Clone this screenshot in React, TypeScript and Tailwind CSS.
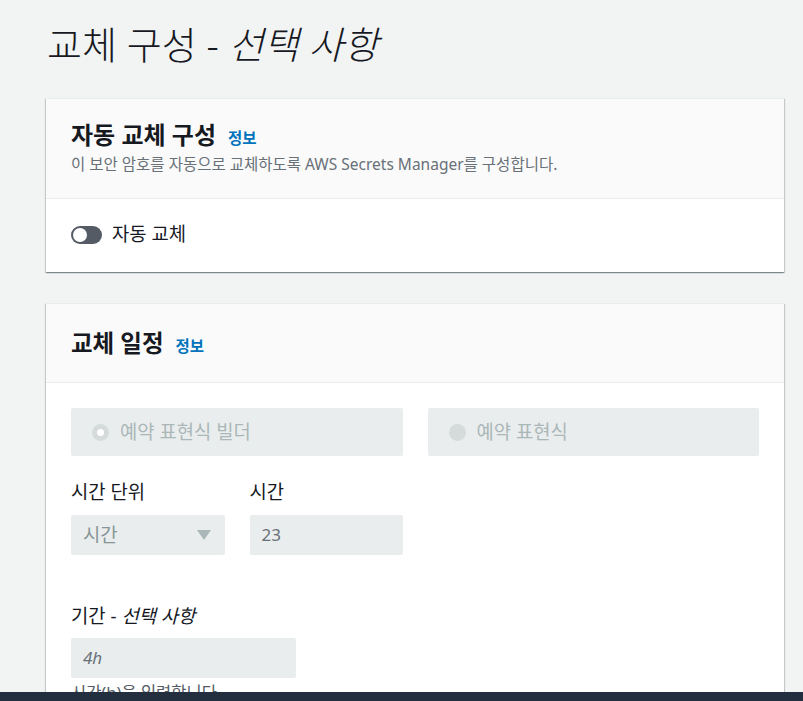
const font = { fontFamily: '"Noto Sans", "Noto Sans CJK KR", sans-serif' };

const cardShadow =
  "shadow-[0_1px_1px_0_rgba(0,28,36,0.3),1px_1px_1px_0_rgba(0,28,36,0.15),-1px_1px_1px_0_rgba(0,28,36,0.15)]";

function InfoLink() {
  return <span className="ml-[12px] text-[15.5px] font-bold text-[#0073bb]">정보</span>;
}

function RadioTile({ label, checked }: { label: string; checked?: boolean }) {
  return (
    <div className="flex h-[48px] items-center gap-[11px] rounded-[2px] bg-[#eaeded] px-[21px]">
      <span className="flex h-[17px] w-[17px] items-center justify-center rounded-full bg-[#d5dbdb]">
        {checked && <span className="h-[7px] w-[7px] rounded-full bg-white" />}
      </span>
      <span className="text-[18.8px] text-[#aab7b8]">{label}</span>
    </div>
  );
}

export default function App() {
  return (
    <div className="min-h-screen bg-[#f2f3f3] pl-[46px] pr-[19px] pt-[22px] pb-[40px] text-[#16191f]" style={font}>
      <h1 className="pl-[1px] text-[38px] font-light leading-[44px]">
        교체 구성 - <i>선택 사항</i>
      </h1>

      {/* 자동 교체 구성 */}
      <section className={`mt-[32px] border-t border-[#eaeded] bg-white ${cardShadow}`}>
        <div className="border-b border-[#eaeded] bg-[#fafafa] px-[25px] pt-[20px] pb-[22px]">
          <div className="flex items-baseline">
            <h2 className="text-[24px] font-bold leading-[32px]">자동 교체 구성</h2>
            <InfoLink />
          </div>
          <p className="mt-[1px] text-[15.5px] leading-[24px] text-[#687078]">
            이 보안 암호를 자동으로 교체하도록 AWS Secrets Manager를 구성합니다.
          </p>
        </div>
        <div className="flex h-[73px] items-center gap-[10px] px-[25px] pb-[2px]">
          <span className="flex h-[18px] w-[31px] items-center rounded-full bg-[#545b64] px-[2px]">
            <span className="h-[14px] w-[14px] rounded-full bg-white" />
          </span>
          <span className="text-[18.8px]">자동 교체</span>
        </div>
      </section>

      {/* 교체 일정 */}
      <section className={`mt-[31px] border-t border-[#eaeded] bg-white ${cardShadow}`}>
        <div className="flex h-[79px] items-center border-b border-[#eaeded] bg-[#fafafa] px-[25px]">
          <div className="flex items-baseline">
            <h2 className="text-[23.5px] font-bold leading-[32px]">교체 일정</h2>
            <InfoLink />
          </div>
        </div>
        <div className="px-[25px] pt-[25px] pb-[40px]">
          <div className="grid grid-cols-2 gap-[25px]">
            <RadioTile label="예약 표현식 빌더" checked />
            <RadioTile label="예약 표현식" />
          </div>

          <div className="mt-[23px] grid w-[332px] grid-cols-2 gap-x-[25px]">
            <div>
              <label className="block text-[18.8px] leading-[26px]">시간 단위</label>
              <div className="mt-[10px] flex h-[40px] items-center justify-between rounded-[2px] bg-[#eaeded] pl-[12px] pr-[14px]">
                <span className="text-[18.8px] text-[#879596]">시간</span>
                <svg width="14" height="10" viewBox="0 0 14 10">
                  <path d="M0 0h14L7 10z" fill="#aab7b8" />
                </svg>
              </div>
            </div>
            <div>
              <label className="block text-[18.8px] leading-[26px]">시간</label>
              <div className="mt-[10px] flex h-[40px] items-center rounded-[2px] bg-[#eaeded] px-[12px]">
                <span className="text-[17px] text-[#687078]">23</span>
              </div>
            </div>
          </div>

          <div className="mt-[48px]">
            <label className="block text-[18.8px] leading-[26px]">
              기간 - <i>선택 사항</i>
            </label>
            <div className="mt-[9px] flex h-[40px] w-[225px] items-center rounded-[2px] bg-[#eaeded] px-[12px]">
              <span className="text-[17px] italic text-[#687078]">4h</span>
            </div>
            <p className="mt-[4px] text-[16.5px] leading-[22px] text-[#545b64]">시간(h)을 입력합니다.</p>
          </div>
        </div>
      </section>

      <div className="fixed inset-x-0 bottom-0 h-[9px] bg-[#232f3e]" />
    </div>
  );
}
